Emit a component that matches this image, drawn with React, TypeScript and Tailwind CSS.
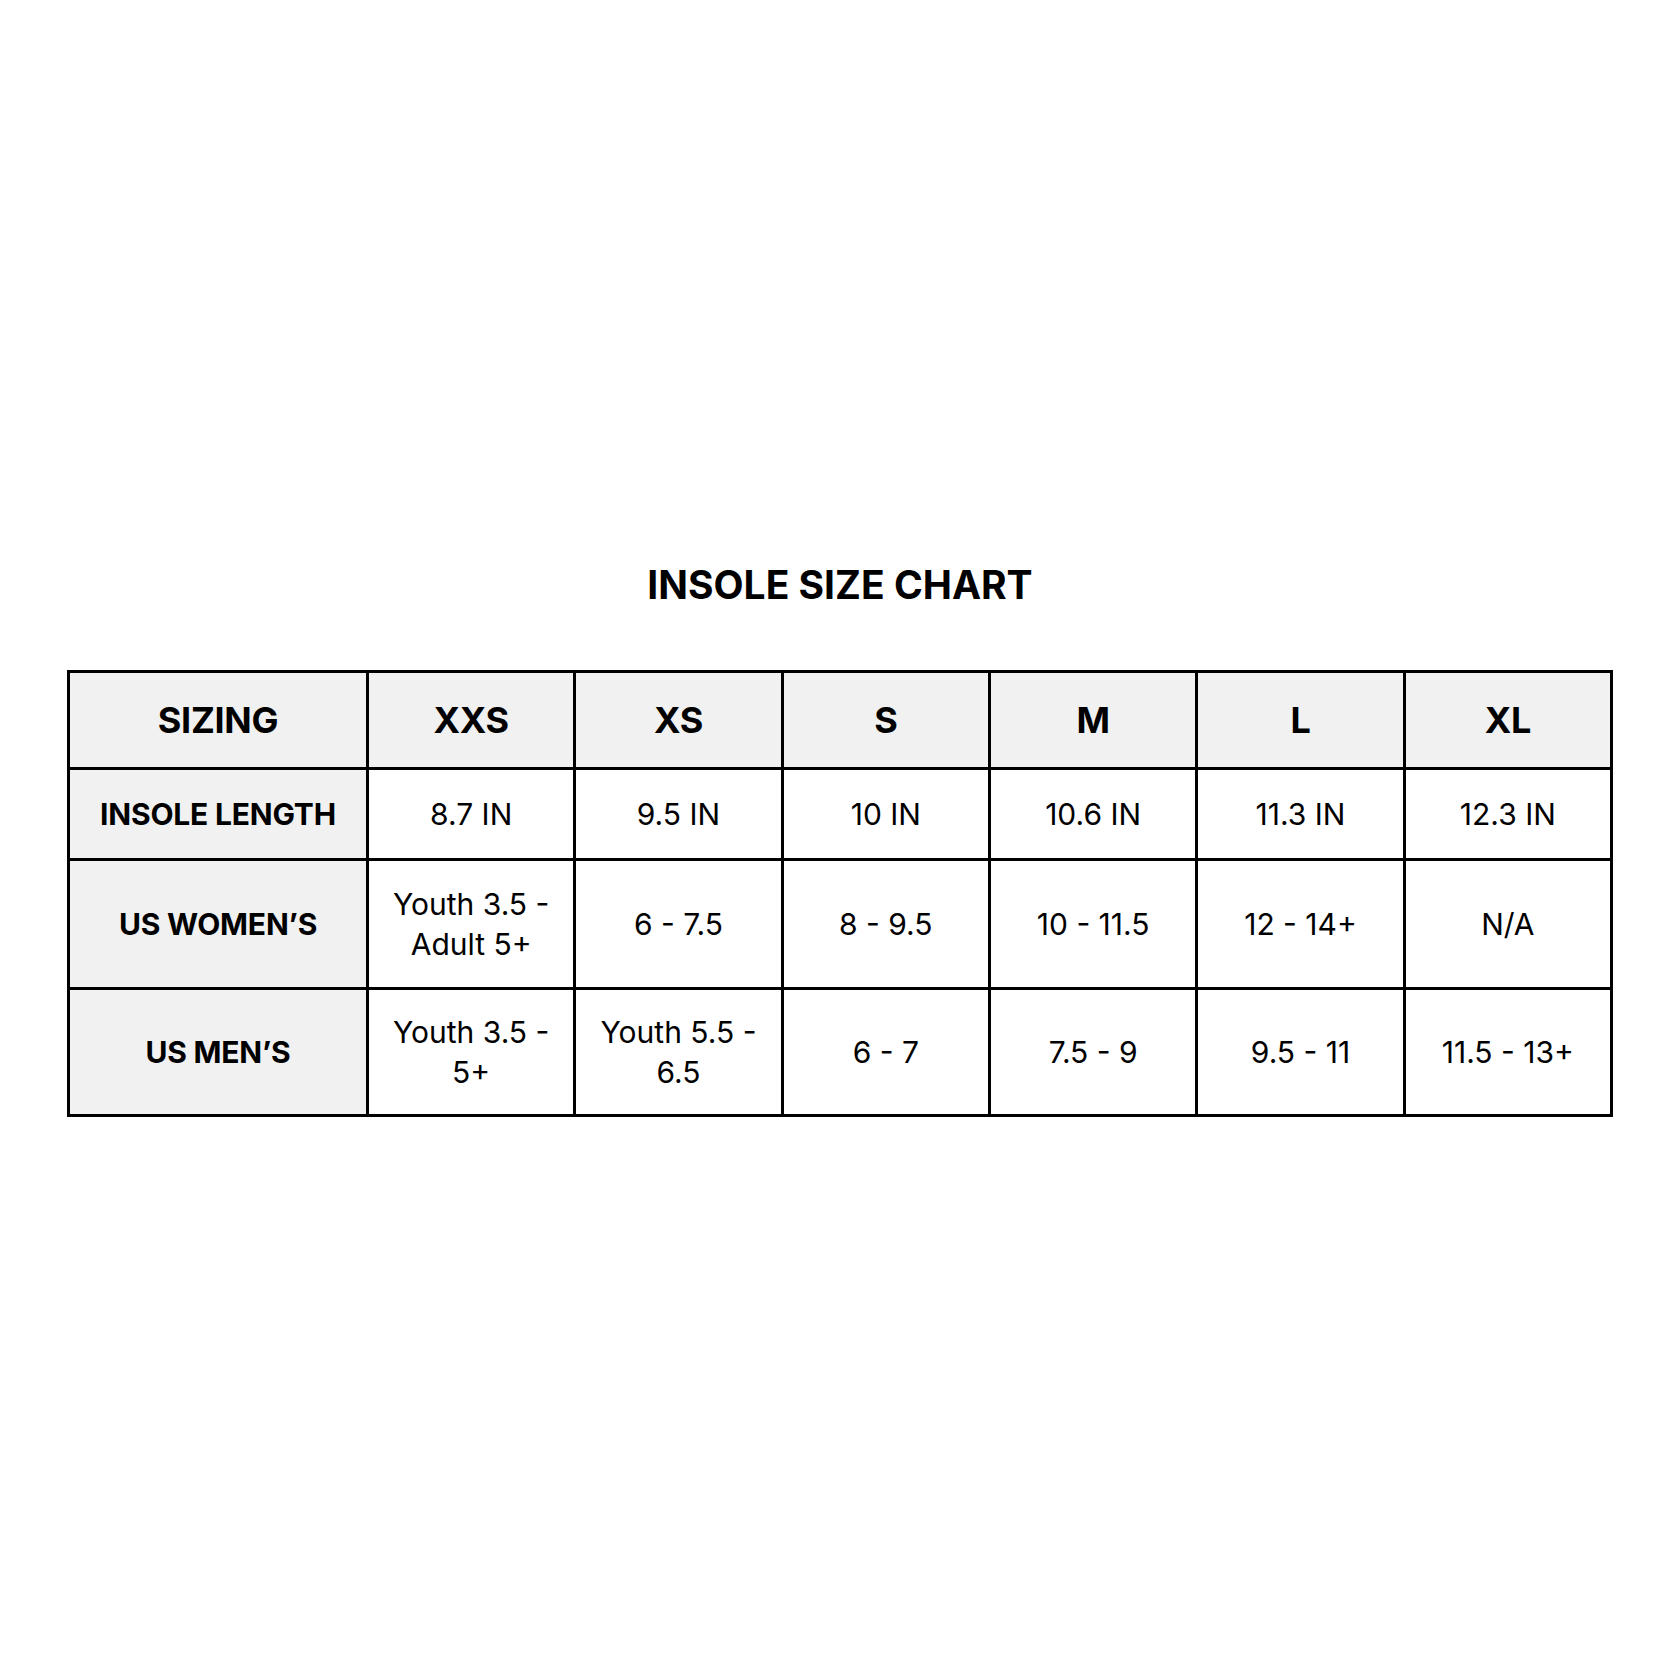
const columns = ["XXS", "XS", "S", "M", "L", "XL"];

const rows: { label: string; values: string[]; height: string }[] = [
	{
		label: "INSOLE LENGTH",
		values: ["8.7 IN", "9.5 IN", "10 IN", "10.6 IN", "11.3 IN", "12.3 IN"],
		height: "h-[88px]",
	},
	{
		label: "US WOMEN’S",
		values: ["Youth 3.5 - Adult 5+", "6 - 7.5", "8 - 9.5", "10 - 11.5", "12 - 14+", "N/A"],
		height: "h-[126px]",
	},
	{
		label: "US MEN’S",
		values: ["Youth 3.5 - 5+", "Youth 5.5 - 6.5", "6 - 7", "7.5 - 9", "9.5 - 11", "11.5 - 13+"],
		height: "h-[124px]",
	},
];

export default function App() {
	return (
		<div
			className="w-[1680px] min-h-[1680px] bg-white text-black pt-[565px]"
			style={{ fontFamily: "Inter, 'Liberation Sans', sans-serif" }}
		>
			<h1 className="text-center text-[39px] leading-[39px] font-bold">INSOLE SIZE CHART</h1>

			{/* chart grid: black background shows through the gaps as the cell borders */}
			<div className="mx-auto mt-[66px] w-[1546px] p-[3px] bg-black grid grid-cols-[296px_repeat(6,1fr)] gap-[3px]">
				<HeadCell>SIZING</HeadCell>
				{columns.map((c) => (
					<HeadCell key={c}>{c}</HeadCell>
				))}

				{rows.map((r) => (
					<Row key={r.label} {...r} />
				))}
			</div>
		</div>
	);
}

function HeadCell({ children }: { children: React.ReactNode }) {
	return (
		<div className="h-[94px] bg-[#f1f1f1] flex items-center justify-center text-[36px] font-bold leading-none tracking-[-0.3px]">
			{children}
		</div>
	);
}

function Row({ label, values, height }: { label: string; values: string[]; height: string }) {
	return (
		<>
			<div className={`${height} bg-[#f1f1f1] flex items-center justify-center text-[30px] font-bold tracking-[-0.2px]`}>
				{label}
			</div>
			{values.map((v, i) => (
				<div
					key={i}
					className={`${height} bg-white flex items-center justify-center text-center px-[16px] text-[30px] leading-[40px] font-normal`}
				>
					{v}
				</div>
			))}
		</>
	);
}
